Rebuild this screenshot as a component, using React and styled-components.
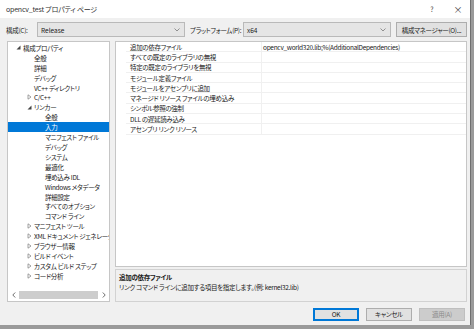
import React from "react";
import styled, { createGlobalStyle } from "styled-components";

const GlobalStyle = createGlobalStyle`
  html, body { margin: 0; padding: 0; }
  body {
    background: #9a9a9a;
    width: 474px;
    height: 329px;
    overflow: hidden;
    font-family: "Noto Sans CJK JP", "Noto Sans", sans-serif;
    font-feature-settings: "palt";
    color: #1a1a1a;
  }
  * { box-sizing: border-box; }
`;

const Window = styled.div`
  width: 471px;
  height: 325px;
  background: #f0f0f0;
  border-right: 1px solid #6f6f6f;
  display: flex;
  flex-direction: column;
`;

const TitleBar = styled.div`
  height: 18px;
  background: #ffffff;
  display: flex;
  align-items: center;
  padding-left: 6px;
  font-size: 7px;
  color: #333;
`;

const Title = styled.span`
  flex: 1;
  letter-spacing: -0.2px;
`;

const TitleIcon = styled.span`
  width: ${(p) => p.$w}px;
  text-align: center;
  font-size: ${(p) => p.$size}px;
  color: #444;
  line-height: 1;
`;

const Toolbar = styled.div`
  height: 15px;
  margin-top: 4px;
  padding-left: 6px;
  display: flex;
  align-items: center;
  font-size: 6.5px;
`;

const Label = styled.span`
  width: ${(p) => p.$w}px;
  margin-left: ${(p) => p.$ml || 0}px;
  white-space: nowrap;
  letter-spacing: -0.3px;
`;

const Select = styled.div`
  width: 148px;
  height: 15px;
  background: #e5e5e5;
  border: 1px solid #b9b9b9;
  display: flex;
  align-items: center;
  padding-left: 3px;
  padding-right: 4px;
`;

const SelectText = styled.span`
  flex: 1;
`;

const Button = styled.div`
  width: ${(p) => p.$w}px;
  height: ${(p) => p.$h}px;
  margin-left: ${(p) => p.$ml || 0}px;
  background: ${(p) => (p.$disabled ? "#cccccc" : "#e1e1e1")};
  border: 1px solid ${(p) => (p.$primary ? "#0078d7" : p.$disabled ? "#bfbfbf" : "#adadad")};
  box-shadow: ${(p) => (p.$primary ? "inset 0 0 0 1px #0078d7" : "none")};
  color: ${(p) => (p.$disabled ? "#8a8a8a" : "#1a1a1a")};
  display: flex;
  align-items: center;
  justify-content: center;
  font-size: 6.5px;
  letter-spacing: -0.3px;
  white-space: nowrap;
`;

const Main = styled.div`
  margin-top: 4px;
  height: 261px;
  padding-left: 7px;
  display: flex;
  gap: 5px;
`;

const TreePanel = styled.div`
  width: 103px;
  background: #ffffff;
  border: 1px solid #c6c6c6;
  display: flex;
  flex-direction: column;
`;

const TreeList = styled.div`
  flex: 1;
  overflow: hidden;
  padding-top: 1px;
`;

const TreeRow = styled.div`
  height: 9.92px;
  display: flex;
  align-items: center;
  padding-left: ${(p) => 8 + p.$level * 11}px;
  background: ${(p) => (p.$selected ? "#0078d7" : "transparent")};
  color: ${(p) => (p.$selected ? "#ffffff" : "#1a1a1a")};
  font-size: 6.5px;
  white-space: nowrap;
  letter-spacing: -0.3px;
`;

const Arrow = styled.span`
  width: 7px;
  height: 9px;
  display: flex;
  align-items: center;
  flex-shrink: 0;
`;

const HScroll = styled.div`
  height: 11px;
  margin-bottom: 1px;
  display: flex;
  align-items: center;
  padding: 0 2px;
  gap: 2px;
`;

const ScrollArrow = styled.span`
  width: 7px;
  display: flex;
  justify-content: center;
`;

const Thumb = styled.div`
  flex: 1;
  height: 8px;
  background: #cdcdcd;
`;

const RightCol = styled.div`
  width: 352px;
  display: flex;
  flex-direction: column;
  gap: 2px;
`;

const Grid = styled.div`
  height: 226px;
  background: #ffffff;
  border: 1px solid #c6c6c6;
  padding-top: 0px;
`;

const GridRow = styled.div`
  height: 10.3px;
  display: grid;
  grid-template-columns: 10px 136px 1fr;
  font-size: 6.5px;
  letter-spacing: -0.3px;
  white-space: nowrap;
`;

const Gutter = styled.div``;

const Cell = styled.div`
  padding-left: ${(p) => p.$pl}px;
  border-bottom: 1px solid #f0f0f0;
  border-right: ${(p) => (p.$divider ? "1px solid #f0f0f0" : "none")};
  display: flex;
  align-items: center;
  overflow: hidden;
`;

const Desc = styled.div`
  flex: 1;
  background: #f0f0f0;
  border: 1px solid #d2d2d2;
  padding: 2px 3px;
  font-size: 6.5px;
  letter-spacing: -0.3px;
  line-height: 10px;
`;

const DescTitle = styled.div`
  font-weight: 700;
`;

const Footer = styled.div`
  flex: 1;
  display: flex;
  justify-content: flex-end;
  align-items: center;
  gap: 7px;
  padding-right: 5px;
  padding-top: 1px;
`;

const Chevron = () => (
  <svg width="6" height="4" viewBox="0 0 6 4">
    <path d="M0.5 0.5 L3 3 L5.5 0.5" fill="none" stroke="#7a7a7a" strokeWidth="0.8" />
  </svg>
);

const Expanded = ({ light }) => (
  <svg width="5" height="5" viewBox="0 0 5 5">
    <polygon points="4.5,0.5 4.5,4.5 0.5,4.5" fill={light ? "#fff" : "#444"} />
  </svg>
);

const Collapsed = () => (
  <svg width="5" height="6" viewBox="0 0 5 6">
    <polygon points="1,0.8 4,3 1,5.2" fill="none" stroke="#8a8a8a" strokeWidth="0.8" />
  </svg>
);

const tree = [
  { t: "構成プロパティ", l: 0, a: "open" },
  { t: "全般", l: 1 },
  { t: "詳細", l: 1 },
  { t: "デバッグ", l: 1 },
  { t: "VC++ ディレクトリ", l: 1 },
  { t: "C/C++", l: 1, a: "closed" },
  { t: "リンカー", l: 1, a: "open" },
  { t: "全般", l: 2 },
  { t: "入力", l: 2, sel: true },
  { t: "マニフェスト ファイル", l: 2 },
  { t: "デバッグ", l: 2 },
  { t: "システム", l: 2 },
  { t: "最適化", l: 2 },
  { t: "埋め込み IDL", l: 2 },
  { t: "Windows メタデータ", l: 2 },
  { t: "詳細設定", l: 2 },
  { t: "すべてのオプション", l: 2 },
  { t: "コマンド ライン", l: 2 },
  { t: "マニフェスト ツール", l: 1, a: "closed" },
  { t: "XML ドキュメント ジェネレーター", l: 1, a: "closed" },
  { t: "ブラウザー情報", l: 1, a: "closed" },
  { t: "ビルド イベント", l: 1, a: "closed" },
  { t: "カスタム ビルド ステップ", l: 1, a: "closed" },
  { t: "コード分析", l: 1, a: "closed" },
];

const props = [
  ["追加の依存ファイル", "opencv_world320.lib;%(AdditionalDependencies)"],
  ["すべての既定のライブラリの無視", ""],
  ["特定の既定のライブラリを無視", ""],
  ["モジュール定義ファイル", ""],
  ["モジュールをアセンブリに追加", ""],
  ["マネージド リソース ファイルの埋め込み", ""],
  ["シンボル参照の強制", ""],
  ["DLL の遅延読み込み", ""],
  ["アセンブリ リンク リソース", ""],
];

export default function App() {
  return (
    <>
      <GlobalStyle />
      <Window>
        <TitleBar>
          <Title>opencv_test プロパティ ページ</Title>
          <TitleIcon $w={10} $size={7}>?</TitleIcon>
          <TitleIcon $w={10} $size={9} style={{ marginLeft: 16, marginRight: 7 }}>
            ×
          </TitleIcon>
        </TitleBar>
        <Toolbar>
          <Label $w={31}>構成(C):</Label>
          <Select>
            <SelectText>Release</SelectText>
            <Chevron />
          </Select>
          <Label $w={53} $ml={5}>プラットフォーム(P):</Label>
          <Select>
            <SelectText>x64</SelectText>
            <Chevron />
          </Select>
          <Button $w={71} $h={15} $ml={5}>構成マネージャー(O)...</Button>
        </Toolbar>
        <Main>
          <TreePanel>
            <TreeList>
              {tree.map((r, i) => (
                <TreeRow key={i} $level={r.l} $selected={r.sel}>
                  <Arrow>
                    {r.a === "open" && <Expanded />}
                    {r.a === "closed" && <Collapsed />}
                  </Arrow>
                  {r.t}
                </TreeRow>
              ))}
            </TreeList>
            <HScroll>
              <ScrollArrow>
                <svg width="4" height="6" viewBox="0 0 4 6">
                  <path d="M3.2 0.5 L0.8 3 L3.2 5.5" fill="none" stroke="#606060" strokeWidth="0.9" />
                </svg>
              </ScrollArrow>
              <Thumb />
              <ScrollArrow>
                <svg width="4" height="6" viewBox="0 0 4 6">
                  <path d="M0.8 0.5 L3.2 3 L0.8 5.5" fill="none" stroke="#606060" strokeWidth="0.9" />
                </svg>
              </ScrollArrow>
            </HScroll>
          </TreePanel>
          <RightCol>
            <Grid>
              {props.map(([n, v], i) => (
                <GridRow key={i}>
                  <Gutter />
                  <Cell $pl={4} $divider>{n}</Cell>
                  <Cell $pl={1}>{v}</Cell>
                </GridRow>
              ))}
            </Grid>
            <Desc>
              <DescTitle>追加の依存ファイル</DescTitle>
              <div>リンク コマンド ラインに追加する項目を指定します。(例: kernel32.lib)</div>
            </Desc>
          </RightCol>
        </Main>
        <Footer>
          <Button $w={46} $h={13} $primary>OK</Button>
          <Button $w={46} $h={13}>キャンセル</Button>
          <Button $w={46} $h={13} $disabled>適用(A)</Button>
        </Footer>
      </Window>
    </>
  );
}
